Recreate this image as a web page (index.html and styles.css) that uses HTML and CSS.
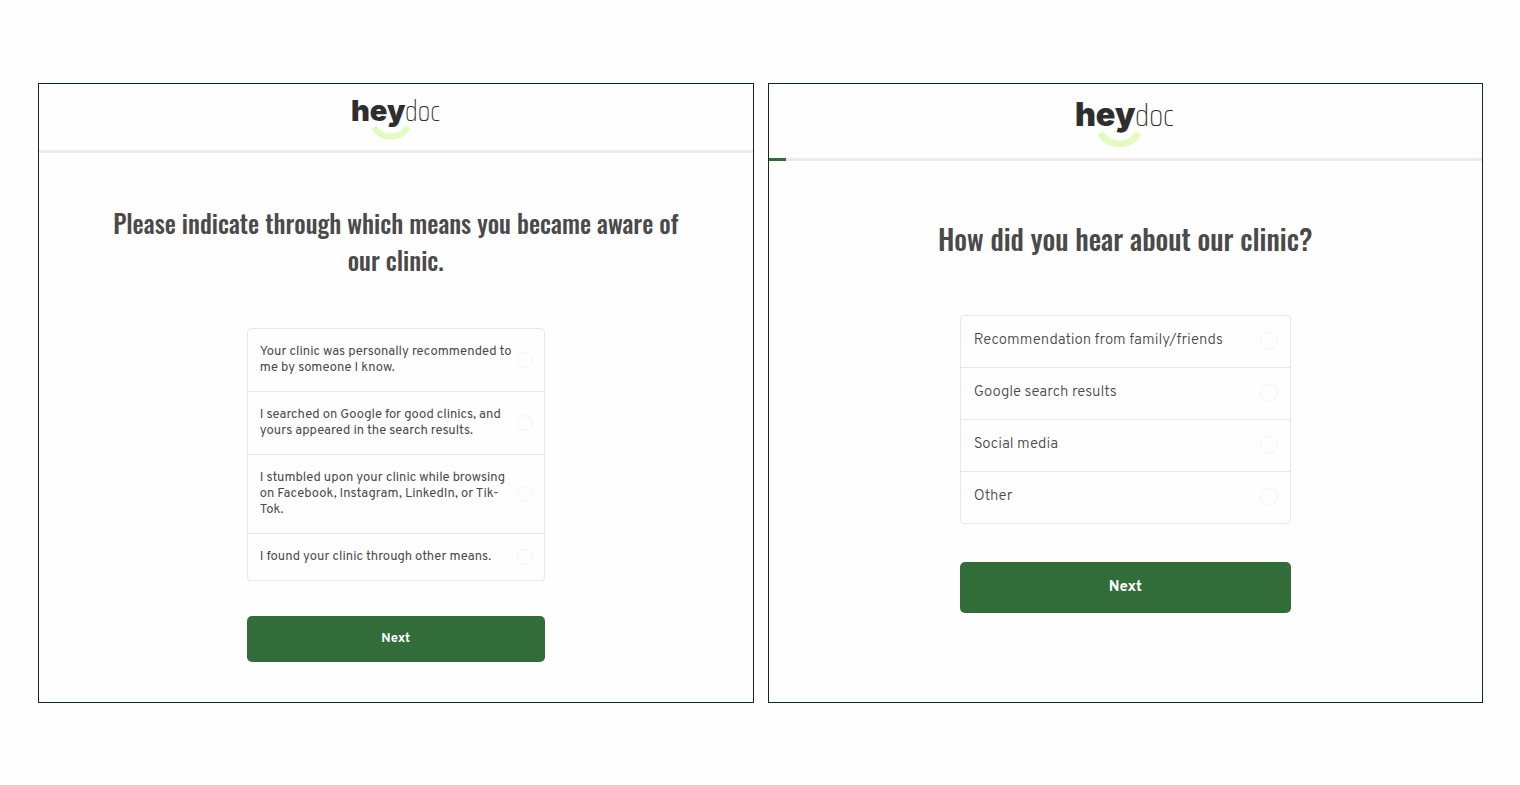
FILE: index.html
```html
<!DOCTYPE html>
<html lang="en">
<head>
    <meta charset="UTF-8">
    <meta name="viewport" content="width=device-width, initial-scale=1.0">
    <title>Heydoc - Clinic Survey</title>
    <link rel="stylesheet" href="styles.css">
</head>
<body>

    <main class="page">

        <!-- Long wording -->
        <section class="panel">
            <header class="panel-header">
                <svg class="logo" viewBox="0 0 88 46" role="img" aria-label="heydoc">
                    <path class="logo-smile" d="M22 31 C29 44 48 44 56 31"/>
                    <text class="logo-hey" x="-1" y="25">hey</text>
                    <text class="logo-doc" x="53" y="25">doc</text>
                </svg>
            </header>
            <div class="progress"></div>

            <form class="survey">
                <h1>Please indicate through which means you became aware of our clinic.</h1>
                <div class="options">
                    <label class="option">
                        <span>Your clinic was personally recommended to me by someone I know.</span>
                        <input type="radio" name="means" value="recommended">
                    </label>
                    <label class="option">
                        <span>I searched on Google for good clinics, and yours appeared in the search results.</span>
                        <input type="radio" name="means" value="google">
                    </label>
                    <label class="option">
                        <span>I stumbled upon your clinic while browsing on Facebook, Instagram, LinkedIn, or Tik-Tok.</span>
                        <input type="radio" name="means" value="social">
                    </label>
                    <label class="option">
                        <span>I found your clinic through other means.</span>
                        <input type="radio" name="means" value="other">
                    </label>
                </div>
                <button type="button" class="next-btn">Next</button>
            </form>
        </section>

        <!-- Short wording -->
        <section class="panel panel-large">
            <header class="panel-header">
                <svg class="logo" viewBox="0 0 88 46" role="img" aria-label="heydoc">
                    <path class="logo-smile" d="M22 31 C29 44 48 44 56 31"/>
                    <text class="logo-hey" x="-1" y="25">hey</text>
                    <text class="logo-doc" x="53" y="25">doc</text>
                </svg>
            </header>
            <div class="progress"><div class="progress-bar"></div></div>

            <form class="survey">
                <h1>How did you hear about our clinic?</h1>
                <div class="options">
                    <label class="option">
                        <span>Recommendation from family/friends</span>
                        <input type="radio" name="source" value="recommended">
                    </label>
                    <label class="option">
                        <span>Google search results</span>
                        <input type="radio" name="source" value="google">
                    </label>
                    <label class="option">
                        <span>Social media</span>
                        <input type="radio" name="source" value="social">
                    </label>
                    <label class="option">
                        <span>Other</span>
                        <input type="radio" name="source" value="other">
                    </label>
                </div>
                <button type="button" class="next-btn">Next</button>
            </form>
        </section>

    </main>

</body>
</html>
```
FILE: styles.css
```css
/* General Styles */
* {
    box-sizing: border-box;
}

body {
    margin: 0;
    background-color: #fefefe;
    color: #4a4a4a;
    font-family: Overpass, Roboto, "Liberation Sans", sans-serif;
}

.page {
    display: grid;
    grid-template-columns: 1fr 1fr;
    gap: 14px;
    padding: 83px 37px 80px 38px;
}

.panel {
    border: 1px solid #0b2a2a;
    background-color: #fefefe;
}

/* Header and logo */
.panel-header {
    display: flex;
    justify-content: center;
    padding: 12px 0 8px;
}

.logo {
    display: block;
    width: 88px;
    height: 46px;
    overflow: visible;
}

.logo-hey {
    font-family: Inter, sans-serif;
    font-size: 29px;
    font-weight: 900;
    fill: #2e2e2e;
}

.logo-doc {
    font-family: "Saira Condensed", Dosis, "Titillium Web", sans-serif;
    font-size: 28px;
    font-weight: 200;
    fill: #2e2e2e;
}

.logo-smile {
    fill: none;
    stroke: #e2fcc0;
    stroke-width: 6;
}

.progress {
    height: 3px;
    background-color: #ebebeb;
}

.progress-bar {
    width: 17px;
    height: 3px;
    background-color: #326d39;
}

/* Survey */
.survey {
    display: flex;
    flex-direction: column;
    align-items: center;
    padding: 51px 40px 40px;
}

h1 {
    max-width: 580px;
    margin: 0 0 50px;
    font-family: Oswald, "Roboto Condensed", Roboto, sans-serif;
    font-size: 25px;
    line-height: 37px;
    font-weight: 500;
    text-align: center;
}

.options {
    width: 100%;
    max-width: 298px;
    border: 1px solid #e6e6e6;
    border-radius: 4px;
}

.option {
    display: flex;
    align-items: center;
    justify-content: space-between;
    gap: 2px;
    padding: 15px 11px 15px 12px;
    font-size: 13px;
    line-height: 16px;
}

.option + .option {
    border-top: 1px solid #e6e6e6;
}

.option input {
    appearance: none;
    flex: none;
    width: 16px;
    height: 16px;
    margin: 0;
    border: 1px solid #f4f4f4;
    border-radius: 50%;
}

.option input:checked {
    background-color: #326d39;
}

.next-btn {
    width: 100%;
    max-width: 298px;
    margin-top: 35px;
    padding: 15px 0;
    border: none;
    border-radius: 5px;
    background-color: #326d39;
    color: white;
    font-family: inherit;
    font-size: 13px;
    line-height: 16px;
    font-weight: bold;
    cursor: pointer;
}

/* Larger panel */
.panel-large .panel-header {
    padding: 14px 0 8px;
}

.panel-large .logo {
    width: 98px;
    height: 52px;
}

.panel-large .survey {
    padding-top: 58px;
}

.panel-large h1 {
    margin-bottom: 56px;
    font-size: 28px;
    line-height: 40px;
}

.panel-large .options,
.panel-large .next-btn {
    max-width: 331px;
}

.panel-large .option {
    padding: 16px 12px 17px 13px;
    font-size: 15px;
    font-weight: 300;
    line-height: 18px;
}

.panel-large .option input {
    width: 18px;
    height: 18px;
}

.panel-large .next-btn {
    margin-top: 38px;
    padding: 17px 0 16px;
    font-size: 15px;
    line-height: 18px;
}
```
